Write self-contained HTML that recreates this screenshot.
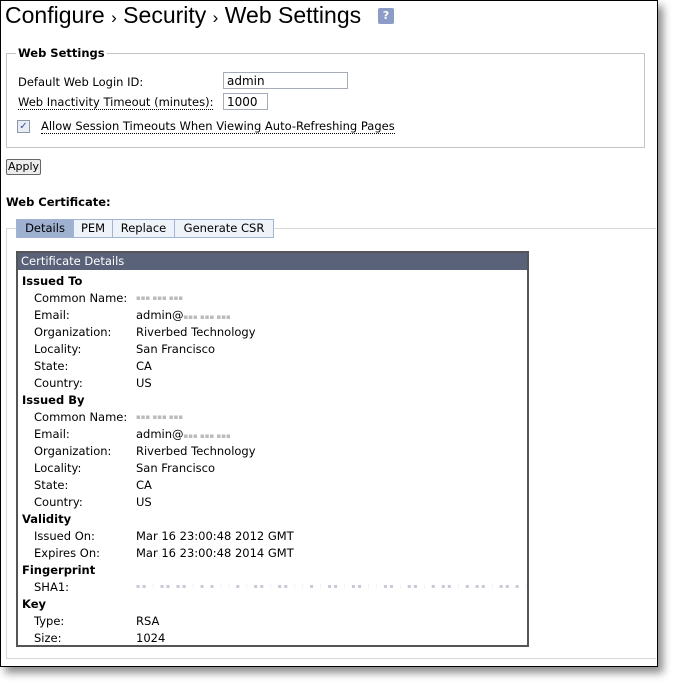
<!DOCTYPE html>
<html><head><meta charset="utf-8"><style>
*{margin:0;padding:0;box-sizing:border-box}
body{width:674px;height:683px;background:#fff;position:relative;overflow:hidden;font-family:"DejaVu Sans","Liberation Sans",sans-serif;font-size:11.5px;color:#000}
.a{position:absolute;white-space:nowrap}
#frame{position:absolute;left:0;top:0;width:658px;height:667px;border:1.5px solid #000;background:#fff;box-shadow:5px 6px 8px rgba(0,0,0,.45)}
.u{border-bottom:1px dotted #000}
.in{position:absolute;border:1px solid #a5acb5;background:#fff;padding:1px 3px;height:17px;line-height:14px;font-size:12px}
.tab{position:absolute;top:219px;height:19px;border:1px solid #a3b3d3;background:#eef2f9;line-height:17px;text-align:center;font-size:11.5px}
.l{position:absolute;left:34px}
.v{position:absolute;left:136px}
.h{position:absolute;left:22px;font-weight:bold}
.c{position:absolute;left:0;top:1px;width:674px;height:683px}
</style></head><body>
<div id="frame"></div>
<div class="a" style="left:5px;top:2px;font-size:23px;font-family:'Liberation Sans',sans-serif">Configure <span style="font-size:17px">›</span> Security <span style="font-size:17px">›</span> Web Settings</div>
<div class="a" style="left:378px;top:8px;width:16px;height:16px;background:#8b9dc6;border-radius:2px;color:#fff;font-size:11px;font-weight:bold;text-align:center;line-height:16px">?</div>

<div class="a" style="left:6px;top:53px;width:639px;height:95px;border:1px solid #c4c4c4"></div>
<div class="a" style="left:16px;top:46px;background:#fff;padding:0 2px;font-weight:bold">Web Settings</div>
<div class="a" style="left:18px;top:75px">Default Web Login ID:</div>
<div class="in" style="left:223px;top:72px;width:125px">admin</div>
<div class="a u" style="left:18px;top:96px;line-height:13px">Web Inactivity Timeout (minutes):</div>
<div class="in" style="left:223px;top:93px;width:45px">1000</div>
<div class="a" style="left:17px;top:120px;width:13px;height:13px;border:1px solid #8a96aa;background:#e8ecf3;color:#3a4fa0;font-size:10px;line-height:11px;text-align:center">✓</div>
<div class="a u" style="left:41px;top:120px;line-height:13px">Allow Session Timeouts When Viewing Auto-Refreshing Pages</div>

<div class="a" style="left:6px;top:159px;width:35px;height:16px;border:1px solid #666;border-radius:2px;background:#ececec;font-size:11px;line-height:14px;text-align:center">Apply</div>
<div class="a" style="left:6px;top:195px;font-weight:bold">Web Certificate:</div>

<div class="a" style="left:6px;top:228px;width:650px;height:431px;border-left:1px solid #d8d8d8;border-top:1px solid #d8d8d8;border-bottom:1px solid #d8d8d8"></div>
<div class="tab" style="left:16px;width:58px;background:#9fb1d1">Details</div>
<div class="tab" style="left:73px;width:40px">PEM</div>
<div class="tab" style="left:112px;width:63px">Replace</div>
<div class="tab" style="left:174px;width:100px">Generate CSR</div>

<div class="a" style="left:16px;top:251px;width:513px;height:396px;border:2px solid #555"></div>
<div class="a" style="left:18px;top:253px;width:509px;height:17px;background:#596279;color:#fff;padding-left:3px;line-height:17px">Certificate Details</div>

<div class="c">
<div class="h" style="top:273px">Issued To</div>
<div class="l" style="top:290px">Common Name:</div><div class="v" style="top:290px;color:#bbb;font-size:7px;line-height:14px">▪▪▪ ▪▪▪ ▪▪▪</div>
<div class="l" style="top:307px">Email:</div><div class="v" style="top:307px">admin@<span style="color:#bbb;font-size:7px">▪▪▪ ▪▪▪ ▪▪▪</span></div>
<div class="l" style="top:324px">Organization:</div><div class="v" style="top:324px">Riverbed Technology</div>
<div class="l" style="top:341px">Locality:</div><div class="v" style="top:341px">San Francisco</div>
<div class="l" style="top:358px">State:</div><div class="v" style="top:358px">CA</div>
<div class="l" style="top:375px">Country:</div><div class="v" style="top:375px">US</div>
<div class="h" style="top:392px">Issued By</div>
<div class="l" style="top:409px">Common Name:</div><div class="v" style="top:409px;color:#bbb;font-size:7px;line-height:14px">▪▪▪ ▪▪▪ ▪▪▪</div>
<div class="l" style="top:426px">Email:</div><div class="v" style="top:426px">admin@<span style="color:#bbb;font-size:7px">▪▪▪ ▪▪▪ ▪▪▪</span></div>
<div class="l" style="top:443px">Organization:</div><div class="v" style="top:443px">Riverbed Technology</div>
<div class="l" style="top:460px">Locality:</div><div class="v" style="top:460px">San Francisco</div>
<div class="l" style="top:477px">State:</div><div class="v" style="top:477px">CA</div>
<div class="l" style="top:494px">Country:</div><div class="v" style="top:494px">US</div>
<div class="h" style="top:511px">Validity</div>
<div class="l" style="top:528px">Issued On:</div><div class="v" style="top:528px">Mar 16 23:00:48 2012 GMT</div>
<div class="l" style="top:545px">Expires On:</div><div class="v" style="top:545px">Mar 16 23:00:48 2014 GMT</div>
<div class="h" style="top:562px">Fingerprint</div>
<div class="l" style="top:579px">SHA1:</div><div class="v" style="top:579px;color:#c8c8d8;font-size:6px;line-height:14px;letter-spacing:2px">▪▪ : ▪▪ ▪▪ : ▪ ▪ : : ▪ : ▪▪ : ▪▪ : : ▪ : ▪▪ : ▪▪ : : ▪▪ : ▪▪ : ▪ ▪▪ : ▪ ▪▪ : ▪▪ ▪ :</div>
<div class="h" style="top:596px">Key</div>
<div class="l" style="top:613px">Type:</div><div class="v" style="top:613px">RSA</div>
<div class="l" style="top:630px">Size:</div><div class="v" style="top:630px">1024</div>
</div>
</body></html>
